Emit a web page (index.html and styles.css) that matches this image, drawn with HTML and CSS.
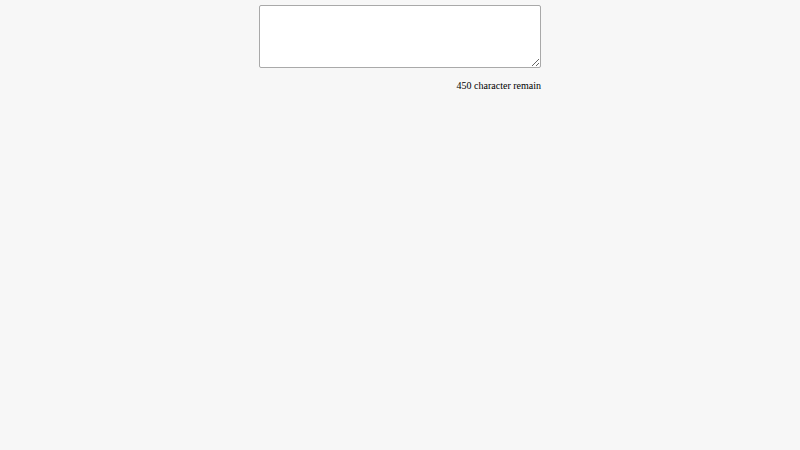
FILE: index.html
```html
<!DOCTYPE html>
<html>
<head>
<meta charset="utf-8">
<link rel="stylesheet" href="styles.css">
</head>
<body>
<div class="wrap">
  <textarea class="box"></textarea>
  <p class="count">450 character remain</p>
</div>
</body>
</html>
```
FILE: styles.css
```css
html, body {
  margin: 0;
  padding: 0;
  background: #f7f7f7;
}
body {
  font-family: "Liberation Serif", "Times New Roman", serif;
  font-size: 16px;
  color: #000;
}
.wrap {
  width: 282px;
  margin: 5px auto 0;
}
.box {
  display: block;
  width: 100%;
  height: 63px;
  box-sizing: border-box;
  margin: 0;
  background: #fff;
  border: 1px solid #a9a9a9;
  border-radius: 2px;
}
.count {
  margin: 12px 0 0;
  text-align: right;
  font-size: 10px;
  line-height: 12px;
}
```
